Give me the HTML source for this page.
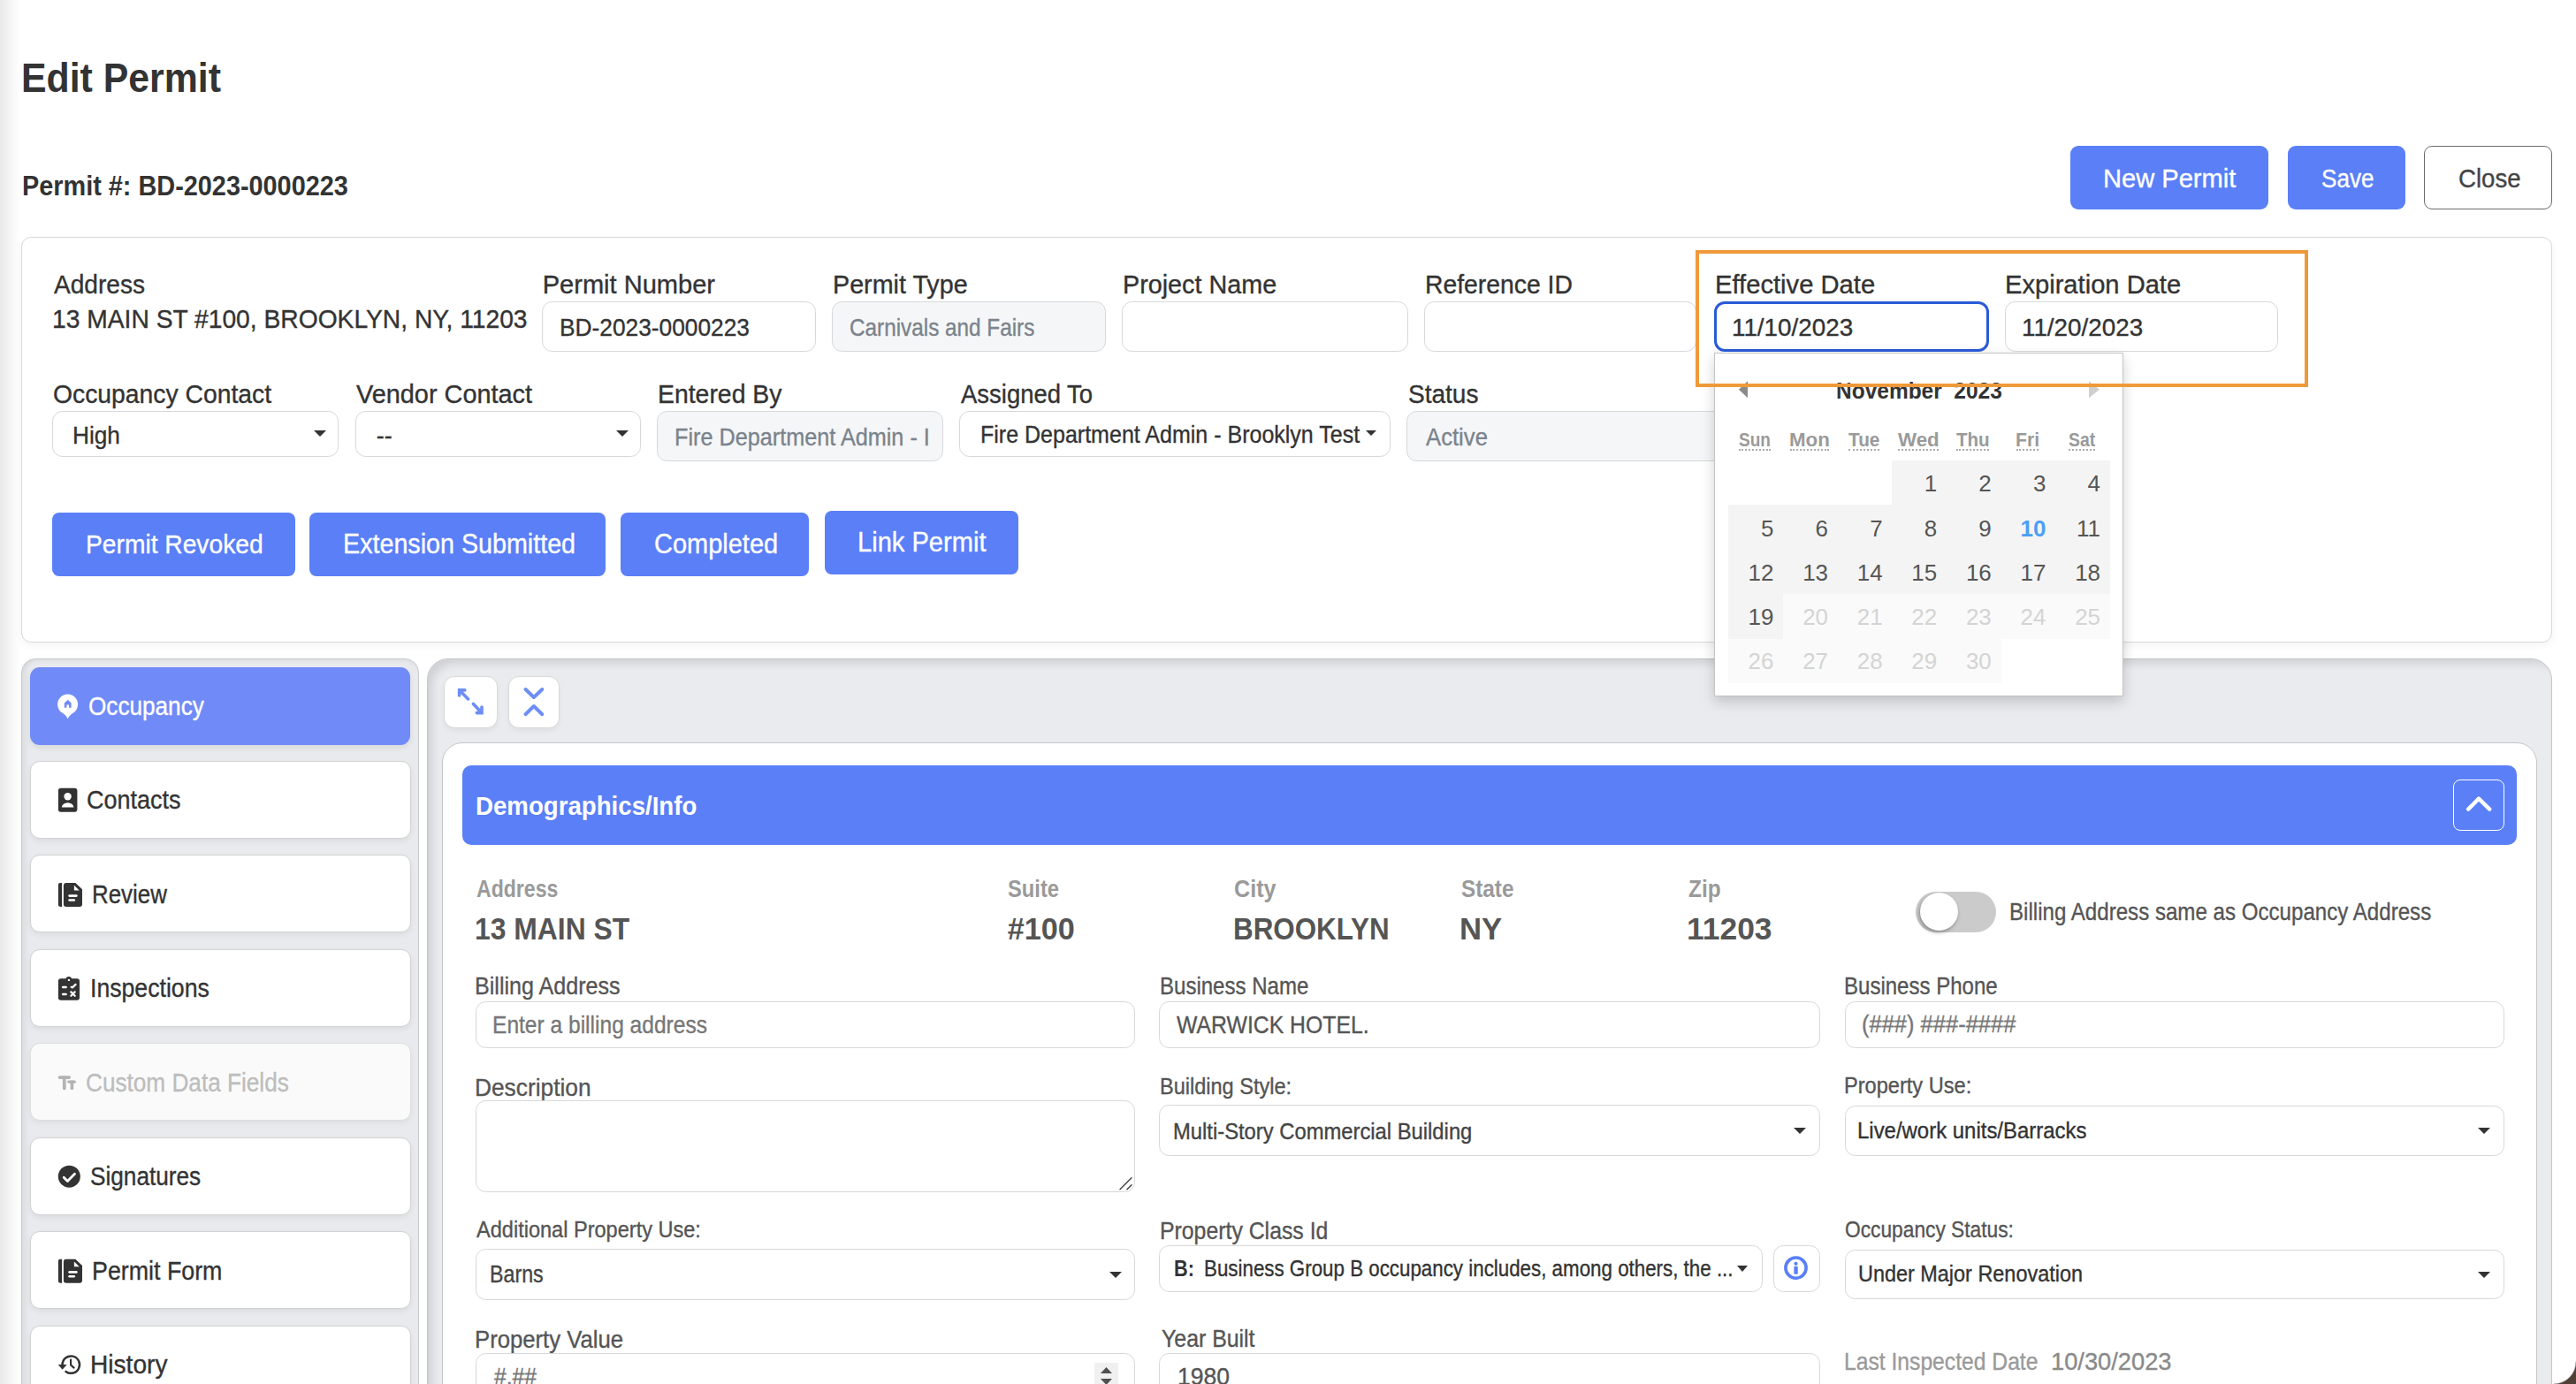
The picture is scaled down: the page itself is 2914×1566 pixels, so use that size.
<!DOCTYPE html>
<html><head><meta charset="utf-8"><style>
html,body{margin:0;padding:0;}
body{width:2914px;height:1566px;overflow:hidden;position:relative;background:#fff;font-family:"Liberation Sans", sans-serif;}
</style></head><body>
<div style="position:absolute;left:0.0px;top:0.0px;width:24.0px;height:1566.0px;box-sizing:border-box;background:linear-gradient(to right,#e9e9e9,#f4f4f4 45%,#fbfbfb 75%,#fff);"></div>
<div id="t0" style="position:absolute;left:23.9px;top:66.0px;font-size:45.67px;line-height:1;white-space:nowrap;color:#333;font-weight:bold;transform:scaleX(0.9377);transform-origin:0 0;">Edit Permit</div>
<div id="t1" style="position:absolute;left:24.8px;top:195.0px;font-size:30.62px;line-height:1;white-space:nowrap;color:#333;font-weight:bold;transform:scaleX(0.9425);transform-origin:0 0;">Permit #: BD-2023-0000223</div>
<div style="position:absolute;left:2342.0px;top:165.0px;width:224.0px;height:72.0px;box-sizing:border-box;background:#5a7ff7;border-radius:9px;"></div>
<div id="t2" style="position:absolute;left:2379.4px;top:187.0px;font-size:30.1px;line-height:1;white-space:nowrap;color:#fff;font-weight:normal;transform:scaleX(0.9666);transform-origin:0 0;-webkit-text-stroke:0.35px currentColor;">New Permit</div>
<div style="position:absolute;left:2588.0px;top:165.0px;width:133.0px;height:72.0px;box-sizing:border-box;background:#5a7ff7;border-radius:9px;"></div>
<div id="t3" style="position:absolute;left:2626.1px;top:187.0px;font-size:30.1px;line-height:1;white-space:nowrap;color:#fff;font-weight:normal;transform:scaleX(0.8675);transform-origin:0 0;-webkit-text-stroke:0.35px currentColor;">Save</div>
<div style="position:absolute;left:2742.0px;top:165.0px;width:145.0px;height:72.0px;box-sizing:border-box;background:#fff;border:1.5px solid #6b6b6b;border-radius:9px;"></div>
<div id="t4" style="position:absolute;left:2780.8px;top:187.0px;font-size:30.1px;line-height:1;white-space:nowrap;color:#444;font-weight:normal;transform:scaleX(0.9175);transform-origin:0 0;-webkit-text-stroke:0.35px currentColor;">Close</div>
<div style="position:absolute;left:24.0px;top:267.8px;width:2863.0px;height:459.2px;box-sizing:border-box;background:#fff;border:1.2px solid #d8d8d8;border-radius:11px;box-shadow:0 4px 8px rgba(0,0,0,0.045);"></div>
<div id="t5" style="position:absolute;left:61.3px;top:308.0px;font-size:29.06px;line-height:1;white-space:nowrap;color:#333;font-weight:normal;transform:scaleX(0.9667);transform-origin:0 0;-webkit-text-stroke:0.35px currentColor;">Address</div>
<div id="t6" style="position:absolute;left:59.4px;top:347.0px;font-size:29.06px;line-height:1;white-space:nowrap;color:#333;font-weight:normal;transform:scaleX(0.9716);transform-origin:0 0;-webkit-text-stroke:0.35px currentColor;">13 MAIN ST #100, BROOKLYN, NY, 11203</div>
<div id="t7" style="position:absolute;left:613.7px;top:308.0px;font-size:29.06px;line-height:1;white-space:nowrap;color:#333;font-weight:normal;-webkit-text-stroke:0.35px currentColor;">Permit Number</div>
<div style="position:absolute;left:613.2px;top:341.2px;width:310.0px;height:56.5px;box-sizing:border-box;background:#fff;border:1.3px solid #d6d8db;border-radius:11.5px;"></div>
<div id="t8" style="position:absolute;left:632.8px;top:358.0px;font-size:26.99px;line-height:1;white-space:nowrap;color:#333;font-weight:normal;transform:scaleX(0.9746);transform-origin:0 0;-webkit-text-stroke:0.35px currentColor;">BD-2023-0000223</div>
<div id="t9" style="position:absolute;left:942.3px;top:308.0px;font-size:29.06px;line-height:1;white-space:nowrap;color:#333;font-weight:normal;transform:scaleX(0.9881);transform-origin:0 0;-webkit-text-stroke:0.35px currentColor;">Permit Type</div>
<div style="position:absolute;left:941.2px;top:341.2px;width:310.1px;height:56.5px;box-sizing:border-box;background:#f5f6f8;border:1.3px solid #d6d8db;border-radius:11.5px;"></div>
<div id="t10" style="position:absolute;left:961.2px;top:358.0px;font-size:26.99px;line-height:1;white-space:nowrap;color:#7b838b;font-weight:normal;transform:scaleX(0.9006);transform-origin:0 0;-webkit-text-stroke:0.35px currentColor;">Carnivals and Fairs</div>
<div id="t11" style="position:absolute;left:1269.7px;top:308.0px;font-size:29.06px;line-height:1;white-space:nowrap;color:#333;font-weight:normal;transform:scaleX(0.9896);transform-origin:0 0;-webkit-text-stroke:0.35px currentColor;">Project Name</div>
<div style="position:absolute;left:1269.2px;top:341.2px;width:323.5px;height:56.5px;box-sizing:border-box;background:#fff;border:1.3px solid #d6d8db;border-radius:11.5px;"></div>
<div id="t12" style="position:absolute;left:1611.7px;top:308.0px;font-size:29.06px;line-height:1;white-space:nowrap;color:#333;font-weight:normal;transform:scaleX(0.9753);transform-origin:0 0;-webkit-text-stroke:0.35px currentColor;">Reference ID</div>
<div style="position:absolute;left:1611.2px;top:341.2px;width:308.1px;height:56.5px;box-sizing:border-box;background:#fff;border:1.3px solid #d6d8db;border-radius:11.5px;"></div>
<div id="t13" style="position:absolute;left:1939.7px;top:308.0px;font-size:29.06px;line-height:1;white-space:nowrap;color:#333;font-weight:normal;transform:scaleX(1.0049);transform-origin:0 0;-webkit-text-stroke:0.35px currentColor;">Effective Date</div>
<div style="position:absolute;left:1938.9px;top:341.2px;width:310.8px;height:56.5px;box-sizing:border-box;background:#fff;border:3px solid #2a5ad8;border-radius:12px;"></div>
<div id="t14" style="position:absolute;left:1959.0px;top:358.0px;font-size:26.99px;line-height:1;white-space:nowrap;color:#333;font-weight:normal;transform:scaleX(1.0304);transform-origin:0 0;-webkit-text-stroke:0.35px currentColor;">11/10/2023</div>
<div id="t15" style="position:absolute;left:2268.1px;top:308.0px;font-size:29.06px;line-height:1;white-space:nowrap;color:#333;font-weight:normal;transform:scaleX(1.0029);transform-origin:0 0;-webkit-text-stroke:0.35px currentColor;">Expiration Date</div>
<div style="position:absolute;left:2267.5px;top:341.2px;width:309.6px;height:56.5px;box-sizing:border-box;background:#fff;border:1.3px solid #d6d8db;border-radius:11.5px;"></div>
<div id="t16" style="position:absolute;left:2287.2px;top:358.0px;font-size:26.99px;line-height:1;white-space:nowrap;color:#333;font-weight:normal;transform:scaleX(1.0304);transform-origin:0 0;-webkit-text-stroke:0.35px currentColor;">11/20/2023</div>
<div id="t17" style="position:absolute;left:60.3px;top:432.0px;font-size:29.06px;line-height:1;white-space:nowrap;color:#333;font-weight:normal;transform:scaleX(0.9746);transform-origin:0 0;-webkit-text-stroke:0.35px currentColor;">Occupancy Contact</div>
<div style="position:absolute;left:59.2px;top:465.2px;width:323.9px;height:52.0px;box-sizing:border-box;background:#fff;border:1.3px solid #d6d8db;border-radius:11.5px;"></div>
<div id="t18" style="position:absolute;left:82.2px;top:480.0px;font-size:26.99px;line-height:1;white-space:nowrap;color:#333;font-weight:normal;transform:scaleX(0.9716);transform-origin:0 0;-webkit-text-stroke:0.35px currentColor;">High</div>
<div style="position:absolute;left:355.0px;top:487.0px;width:0;height:0;border-left:7.0px solid transparent;border-right:7.0px solid transparent;border-top:7.0px solid #333;"></div>
<div id="t19" style="position:absolute;left:403.1px;top:432.0px;font-size:29.06px;line-height:1;white-space:nowrap;color:#333;font-weight:normal;transform:scaleX(0.9942);transform-origin:0 0;-webkit-text-stroke:0.35px currentColor;">Vendor Contact</div>
<div style="position:absolute;left:401.6px;top:465.2px;width:323.1px;height:52.0px;box-sizing:border-box;background:#fff;border:1.3px solid #d6d8db;border-radius:11.5px;"></div>
<div id="t20" style="position:absolute;left:425.7px;top:480.0px;font-size:26.99px;line-height:1;white-space:nowrap;color:#333;font-weight:normal;-webkit-text-stroke:0.35px currentColor;">--</div>
<div style="position:absolute;left:697.0px;top:487.0px;width:0;height:0;border-left:7.0px solid transparent;border-right:7.0px solid transparent;border-top:7.0px solid #333;"></div>
<div id="t21" style="position:absolute;left:743.7px;top:432.0px;font-size:29.06px;line-height:1;white-space:nowrap;color:#333;font-weight:normal;transform:scaleX(0.9776);transform-origin:0 0;-webkit-text-stroke:0.35px currentColor;">Entered By</div>
<div style="position:absolute;left:743.0px;top:465.2px;width:324.2px;height:56.5px;box-sizing:border-box;background:#f5f6f8;border:1.3px solid #d6d8db;border-radius:11.5px;"></div>
<div id="t22" style="position:absolute;left:762.8px;top:482.0px;font-size:26.99px;line-height:1;white-space:nowrap;color:#7b838b;font-weight:normal;transform:scaleX(0.9349);transform-origin:0 0;-webkit-text-stroke:0.35px currentColor;">Fire Department Admin - I</div>
<div id="t23" style="position:absolute;left:1087.2px;top:432.0px;font-size:29.06px;line-height:1;white-space:nowrap;color:#333;font-weight:normal;transform:scaleX(0.9454);transform-origin:0 0;-webkit-text-stroke:0.35px currentColor;">Assigned To</div>
<div style="position:absolute;left:1085.2px;top:465.2px;width:487.5px;height:52.0px;box-sizing:border-box;background:#fff;border:1.3px solid #d6d8db;border-radius:11.5px;"></div>
<div id="t24" style="position:absolute;left:1109.1px;top:479.0px;font-size:26.99px;line-height:1;white-space:nowrap;color:#333;font-weight:normal;transform:scaleX(0.9271);transform-origin:0 0;-webkit-text-stroke:0.35px currentColor;">Fire Department Admin - Brooklyn Test</div>
<div style="position:absolute;left:1545.2px;top:487.1px;width:0;height:0;border-left:6.8px solid transparent;border-right:6.8px solid transparent;border-top:6.8px solid #333;"></div>
<div id="t25" style="position:absolute;left:1592.7px;top:432.0px;font-size:29.06px;line-height:1;white-space:nowrap;color:#333;font-weight:normal;transform:scaleX(0.9651);transform-origin:0 0;-webkit-text-stroke:0.35px currentColor;">Status</div>
<div style="position:absolute;left:1591.2px;top:465.2px;width:369.5px;height:56.5px;box-sizing:border-box;background:#f5f6f8;border:1.3px solid #d6d8db;border-radius:11.5px;"></div>
<div id="t26" style="position:absolute;left:1612.7px;top:482.0px;font-size:26.99px;line-height:1;white-space:nowrap;color:#7b838b;font-weight:normal;transform:scaleX(0.9521);transform-origin:0 0;-webkit-text-stroke:0.35px currentColor;">Active</div>
<div style="position:absolute;left:59.0px;top:580.0px;width:275.0px;height:71.5px;box-sizing:border-box;background:#5a7ff7;border-radius:8px;"></div>
<div id="t27" style="position:absolute;left:96.9px;top:600.0px;font-size:30.41px;line-height:1;white-space:nowrap;color:#fff;font-weight:normal;transform:scaleX(0.9275);transform-origin:0 0;-webkit-text-stroke:0.35px currentColor;">Permit Revoked</div>
<div style="position:absolute;left:350.0px;top:580.0px;width:335.0px;height:71.5px;box-sizing:border-box;background:#5a7ff7;border-radius:8px;"></div>
<div id="t28" style="position:absolute;left:387.5px;top:600.0px;font-size:31.14px;line-height:1;white-space:nowrap;color:#fff;font-weight:normal;transform:scaleX(0.9214);transform-origin:0 0;-webkit-text-stroke:0.35px currentColor;">Extension Submitted</div>
<div style="position:absolute;left:702.0px;top:580.0px;width:213.0px;height:71.5px;box-sizing:border-box;background:#5a7ff7;border-radius:8px;"></div>
<div id="t29" style="position:absolute;left:740.1px;top:600.0px;font-size:31.14px;line-height:1;white-space:nowrap;color:#fff;font-weight:normal;transform:scaleX(0.9311);transform-origin:0 0;-webkit-text-stroke:0.35px currentColor;">Completed</div>
<div style="position:absolute;left:933.0px;top:578.0px;width:219.0px;height:72.0px;box-sizing:border-box;background:#5a7ff7;border-radius:8px;"></div>
<div id="t30" style="position:absolute;left:970.1px;top:598.0px;font-size:31.14px;line-height:1;white-space:nowrap;color:#fff;font-weight:normal;transform:scaleX(0.9349);transform-origin:0 0;-webkit-text-stroke:0.35px currentColor;">Link Permit</div>
<div style="position:absolute;left:24.0px;top:744.5px;width:450.0px;height:855.5px;box-sizing:border-box;background:#e9eaee;border:1.2px solid #c9cace;border-radius:16px;box-shadow:inset 7px 0 7px -4px rgba(0,0,0,0.07), inset 0 6px 6px -4px rgba(0,0,0,0.05);"></div>
<div style="position:absolute;left:34.0px;top:755.0px;width:430.0px;height:87.5px;box-sizing:border-box;background:#708bf7;border-radius:11px;box-shadow:0 3px 6px rgba(0,0,0,0.08);"></div>
<div id="t31" style="position:absolute;left:99.5px;top:785.0px;font-size:29.06px;line-height:1;white-space:nowrap;color:#fff;font-weight:normal;transform:scaleX(0.9000);transform-origin:0 0;-webkit-text-stroke:0.35px currentColor;">Occupancy</div>
<div style="position:absolute;left:33.5px;top:861.0px;width:431.0px;height:88.0px;box-sizing:border-box;background:#fff;border:1.2px solid #d2d2d2;border-radius:11px;box-shadow:0 3px 6px rgba(0,0,0,0.06);"></div>
<div id="t32" style="position:absolute;left:98.3px;top:891.0px;font-size:29.06px;line-height:1;white-space:nowrap;color:#333;font-weight:normal;transform:scaleX(0.9283);transform-origin:0 0;-webkit-text-stroke:0.35px currentColor;">Contacts</div>
<div style="position:absolute;left:33.5px;top:967.1px;width:431.0px;height:88.0px;box-sizing:border-box;background:#fff;border:1.2px solid #d2d2d2;border-radius:11px;box-shadow:0 3px 6px rgba(0,0,0,0.06);"></div>
<div id="t33" style="position:absolute;left:104.1px;top:998.0px;font-size:29.06px;line-height:1;white-space:nowrap;color:#333;font-weight:normal;transform:scaleX(0.8911);transform-origin:0 0;-webkit-text-stroke:0.35px currentColor;">Review</div>
<div style="position:absolute;left:33.5px;top:1074.0px;width:431.0px;height:88.0px;box-sizing:border-box;background:#fff;border:1.2px solid #d2d2d2;border-radius:11px;box-shadow:0 3px 6px rgba(0,0,0,0.06);"></div>
<div id="t34" style="position:absolute;left:101.5px;top:1104.0px;font-size:29.06px;line-height:1;white-space:nowrap;color:#333;font-weight:normal;transform:scaleX(0.9175);transform-origin:0 0;-webkit-text-stroke:0.35px currentColor;">Inspections</div>
<div style="position:absolute;left:33.5px;top:1180.1px;width:431.0px;height:88.0px;box-sizing:border-box;background:#fafafa;border:1.2px solid #dedede;border-radius:11px;box-shadow:0 3px 6px rgba(0,0,0,0.05);"></div>
<div id="t35" style="position:absolute;left:97.2px;top:1211.0px;font-size:29.06px;line-height:1;white-space:nowrap;color:#bdbdbd;font-weight:normal;transform:scaleX(0.9009);transform-origin:0 0;-webkit-text-stroke:0.35px currentColor;">Custom Data Fields</div>
<div style="position:absolute;left:33.5px;top:1287.0px;width:431.0px;height:88.0px;box-sizing:border-box;background:#fff;border:1.2px solid #d2d2d2;border-radius:11px;box-shadow:0 3px 6px rgba(0,0,0,0.06);"></div>
<div id="t36" style="position:absolute;left:101.8px;top:1317.0px;font-size:29.06px;line-height:1;white-space:nowrap;color:#333;font-weight:normal;transform:scaleX(0.9014);transform-origin:0 0;-webkit-text-stroke:0.35px currentColor;">Signatures</div>
<div style="position:absolute;left:33.5px;top:1392.5px;width:431.0px;height:88.0px;box-sizing:border-box;background:#fff;border:1.2px solid #d2d2d2;border-radius:11px;box-shadow:0 3px 6px rgba(0,0,0,0.06);"></div>
<div id="t37" style="position:absolute;left:104.1px;top:1424.0px;font-size:29.06px;line-height:1;white-space:nowrap;color:#333;font-weight:normal;transform:scaleX(0.9230);transform-origin:0 0;-webkit-text-stroke:0.35px currentColor;">Permit Form</div>
<div style="position:absolute;left:33.5px;top:1500.0px;width:431.0px;height:88.0px;box-sizing:border-box;background:#fff;border:1.2px solid #d2d2d2;border-radius:11px;box-shadow:0 3px 6px rgba(0,0,0,0.06);"></div>
<div id="t38" style="position:absolute;left:102.2px;top:1530.0px;font-size:29.06px;line-height:1;white-space:nowrap;color:#333;font-weight:normal;transform:scaleX(0.9679);transform-origin:0 0;-webkit-text-stroke:0.35px currentColor;">History</div>
<div style="position:absolute;left:483.0px;top:744.5px;width:2404.0px;height:875.5px;box-sizing:border-box;background:#eaebef;border:1.2px solid #c4c5c9;border-radius:24px;box-shadow:inset 8px 8px 10px -3px rgba(0,0,0,0.11);"></div>
<div style="position:absolute;left:502.0px;top:765.3px;width:61.3px;height:59.2px;box-sizing:border-box;background:#fff;border:1.2px solid #d9d9d9;border-radius:12px;box-shadow:0 3px 5px rgba(0,0,0,0.05);"></div>
<div style="position:absolute;left:575.4px;top:765.3px;width:57.8px;height:59.2px;box-sizing:border-box;background:#fff;border:1.2px solid #d9d9d9;border-radius:12px;box-shadow:0 3px 5px rgba(0,0,0,0.05);"></div>
<div style="position:absolute;left:499.5px;top:840.0px;width:2370.5px;height:780.0px;box-sizing:border-box;background:#fff;border:1.2px solid #c4c5c8;border-radius:23px;"></div>
<div style="position:absolute;left:523.0px;top:866.0px;width:2324.0px;height:89.6px;box-sizing:border-box;background:#5a7ff7;border-radius:10px;"></div>
<div id="t39" style="position:absolute;left:538.4px;top:897.0px;font-size:29.58px;line-height:1;white-space:nowrap;color:#fff;font-weight:bold;transform:scaleX(0.9345);transform-origin:0 0;">Demographics/Info</div>
<div style="position:absolute;left:2775.0px;top:882.0px;width:58.0px;height:58.0px;box-sizing:border-box;border:1.5px solid #fff;border-radius:8px;"></div>
<div id="t40" style="position:absolute;left:539.3px;top:993.0px;font-size:26.99px;line-height:1;white-space:nowrap;color:#9a9a9a;font-weight:bold;transform:scaleX(0.8554);transform-origin:0 0;">Address</div>
<div id="t41" style="position:absolute;left:537.4px;top:1034.0px;font-size:34.25px;line-height:1;white-space:nowrap;color:#555;font-weight:bold;transform:scaleX(0.9298);transform-origin:0 0;">13 MAIN ST</div>
<div id="t42" style="position:absolute;left:1139.7px;top:993.0px;font-size:26.99px;line-height:1;white-space:nowrap;color:#9a9a9a;font-weight:bold;transform:scaleX(0.8793);transform-origin:0 0;">Suite</div>
<div id="t43" style="position:absolute;left:1139.7px;top:1034.0px;font-size:34.25px;line-height:1;white-space:nowrap;color:#555;font-weight:bold;">#100</div>
<div id="t44" style="position:absolute;left:1395.8px;top:993.0px;font-size:26.99px;line-height:1;white-space:nowrap;color:#9a9a9a;font-weight:bold;transform:scaleX(0.9326);transform-origin:0 0;">City</div>
<div id="t45" style="position:absolute;left:1394.9px;top:1034.0px;font-size:34.25px;line-height:1;white-space:nowrap;color:#555;font-weight:bold;transform:scaleX(0.9159);transform-origin:0 0;">BROOKLYN</div>
<div id="t46" style="position:absolute;left:1652.7px;top:993.0px;font-size:26.99px;line-height:1;white-space:nowrap;color:#9a9a9a;font-weight:bold;transform:scaleX(0.9018);transform-origin:0 0;">State</div>
<div id="t47" style="position:absolute;left:1650.7px;top:1034.0px;font-size:34.25px;line-height:1;white-space:nowrap;color:#555;font-weight:bold;transform:scaleX(1.0124);transform-origin:0 0;">NY</div>
<div id="t48" style="position:absolute;left:1909.7px;top:993.0px;font-size:26.99px;line-height:1;white-space:nowrap;color:#9a9a9a;font-weight:bold;transform:scaleX(0.9054);transform-origin:0 0;">Zip</div>
<div id="t49" style="position:absolute;left:1907.6px;top:1034.0px;font-size:34.25px;line-height:1;white-space:nowrap;color:#555;font-weight:bold;transform:scaleX(1.0343);transform-origin:0 0;">11203</div>
<div style="position:absolute;left:2167.0px;top:1008.6px;width:90.6px;height:46.2px;box-sizing:border-box;background:#cbcbcb;border-radius:23px;"></div>
<div style="position:absolute;left:2171.5px;top:1010.3px;width:43.0px;height:43.0px;box-sizing:border-box;background:#fff;border-radius:50%;box-shadow:-1px 2px 4px rgba(0,0,0,0.35);"></div>
<div id="t50" style="position:absolute;left:2272.9px;top:1018.0px;font-size:27.51px;line-height:1;white-space:nowrap;color:#555;font-weight:normal;transform:scaleX(0.8770);transform-origin:0 0;-webkit-text-stroke:0.35px currentColor;">Billing Address same as Occupancy Address</div>
<div id="t51" style="position:absolute;left:537.4px;top:1103.0px;font-size:26.99px;line-height:1;white-space:nowrap;color:#555;font-weight:normal;transform:scaleX(0.9296);transform-origin:0 0;-webkit-text-stroke:0.35px currentColor;">Billing Address</div>
<div style="position:absolute;left:537.8px;top:1132.7px;width:746.4px;height:53.3px;box-sizing:border-box;background:#fff;border:1.3px solid #d6d8db;border-radius:11.5px;"></div>
<div id="t52" style="position:absolute;left:556.9px;top:1147.0px;font-size:26.99px;line-height:1;white-space:nowrap;color:#777;font-weight:normal;transform:scaleX(0.9100);transform-origin:0 0;-webkit-text-stroke:0.35px currentColor;">Enter a billing address</div>
<div id="t53" style="position:absolute;left:537.4px;top:1218.0px;font-size:26.99px;line-height:1;white-space:nowrap;color:#555;font-weight:normal;transform:scaleX(0.9745);transform-origin:0 0;-webkit-text-stroke:0.35px currentColor;">Description</div>
<div style="position:absolute;left:537.8px;top:1245.2px;width:746.4px;height:104.2px;box-sizing:border-box;background:#fff;border:1.3px solid #d6d8db;border-radius:11.5px;"></div>
<div id="t54" style="position:absolute;left:539.3px;top:1379.0px;font-size:24.91px;line-height:1;white-space:nowrap;color:#555;font-weight:normal;transform:scaleX(0.9454);transform-origin:0 0;-webkit-text-stroke:0.35px currentColor;">Additional Property Use:</div>
<div style="position:absolute;left:537.8px;top:1413.4px;width:746.4px;height:57.8px;box-sizing:border-box;background:#fff;border:1.3px solid #d6d8db;border-radius:11.5px;"></div>
<div id="t55" style="position:absolute;left:553.5px;top:1429.0px;font-size:26.99px;line-height:1;white-space:nowrap;color:#444;font-weight:normal;transform:scaleX(0.8603);transform-origin:0 0;-webkit-text-stroke:0.35px currentColor;">Barns</div>
<div style="position:absolute;left:1255.0px;top:1439.0px;width:0;height:0;border-left:7.0px solid transparent;border-right:7.0px solid transparent;border-top:7.5px solid #333;"></div>
<div id="t56" style="position:absolute;left:537.4px;top:1503.0px;font-size:26.99px;line-height:1;white-space:nowrap;color:#555;font-weight:normal;transform:scaleX(0.9522);transform-origin:0 0;-webkit-text-stroke:0.35px currentColor;">Property Value</div>
<div style="position:absolute;left:537.8px;top:1530.6px;width:746.4px;height:90.1px;box-sizing:border-box;background:#fff;border:1.3px solid #d6d8db;border-radius:11.5px;"></div>
<div id="t57" style="position:absolute;left:558.7px;top:1545.0px;font-size:26.99px;line-height:1;white-space:nowrap;color:#777;font-weight:normal;transform:scaleX(0.9141);transform-origin:0 0;-webkit-text-stroke:0.35px currentColor;">#.##</div>
<div id="t58" style="position:absolute;left:1311.9px;top:1103.0px;font-size:26.99px;line-height:1;white-space:nowrap;color:#555;font-weight:normal;transform:scaleX(0.8905);transform-origin:0 0;-webkit-text-stroke:0.35px currentColor;">Business Name</div>
<div style="position:absolute;left:1311.2px;top:1132.6px;width:748.0px;height:53.5px;box-sizing:border-box;background:#fff;border:1.3px solid #d6d8db;border-radius:11.5px;"></div>
<div id="t59" style="position:absolute;left:1330.7px;top:1147.0px;font-size:26.99px;line-height:1;white-space:nowrap;color:#555;font-weight:normal;transform:scaleX(0.9189);transform-origin:0 0;-webkit-text-stroke:0.35px currentColor;">WARWICK HOTEL.</div>
<div id="t60" style="position:absolute;left:1311.8px;top:1217.0px;font-size:24.91px;line-height:1;white-space:nowrap;color:#555;font-weight:normal;transform:scaleX(0.9441);transform-origin:0 0;-webkit-text-stroke:0.35px currentColor;">Building Style:</div>
<div style="position:absolute;left:1311.2px;top:1250.2px;width:748.0px;height:57.8px;box-sizing:border-box;background:#fff;border:1.3px solid #d6d8db;border-radius:11.5px;"></div>
<div id="t61" style="position:absolute;left:1326.8px;top:1268.0px;font-size:24.91px;line-height:1;white-space:nowrap;color:#444;font-weight:normal;transform:scaleX(0.9549);transform-origin:0 0;-webkit-text-stroke:0.35px currentColor;">Multi-Story Commercial Building</div>
<div style="position:absolute;left:2029.0px;top:1275.5px;width:0;height:0;border-left:7.0px solid transparent;border-right:7.0px solid transparent;border-top:7.5px solid #333;"></div>
<div id="t62" style="position:absolute;left:1311.9px;top:1380.0px;font-size:26.99px;line-height:1;white-space:nowrap;color:#555;font-weight:normal;transform:scaleX(0.9198);transform-origin:0 0;-webkit-text-stroke:0.35px currentColor;">Property Class Id</div>
<div style="position:absolute;left:1311.2px;top:1408.7px;width:682.5px;height:53.4px;box-sizing:border-box;background:#fff;border:1.3px solid #d6d8db;border-radius:11.5px;"></div>
<div id="t63" style="position:absolute;left:1327.8px;top:1423.0px;font-size:24.91px;line-height:1;white-space:nowrap;color:#333;font-weight:bold;transform:scaleX(0.8701);transform-origin:0 0;">B:</div>
<div id="t64" style="position:absolute;left:1361.9px;top:1423.0px;font-size:24.91px;line-height:1;white-space:nowrap;color:#333;font-weight:normal;transform:scaleX(0.8969);transform-origin:0 0;-webkit-text-stroke:0.35px currentColor;">Business Group B occupancy includes, among others, the ...</div>
<div style="position:absolute;left:1964.5px;top:1432.0px;width:0;height:0;border-left:6.8px solid transparent;border-right:6.8px solid transparent;border-top:7.5px solid #333;"></div>
<div style="position:absolute;left:2005.8px;top:1408.7px;width:53.4px;height:53.4px;box-sizing:border-box;background:#fff;border:1.3px solid #d6d8db;border-radius:11.5px;"></div>
<div id="t65" style="position:absolute;left:1313.7px;top:1502.0px;font-size:26.99px;line-height:1;white-space:nowrap;color:#555;font-weight:normal;transform:scaleX(0.9216);transform-origin:0 0;-webkit-text-stroke:0.35px currentColor;">Year Built</div>
<div style="position:absolute;left:1311.2px;top:1530.7px;width:748.0px;height:90.0px;box-sizing:border-box;background:#fff;border:1.3px solid #d6d8db;border-radius:11.5px;"></div>
<div id="t66" style="position:absolute;left:1331.7px;top:1545.0px;font-size:26.99px;line-height:1;white-space:nowrap;color:#555;font-weight:normal;transform:scaleX(0.9821);transform-origin:0 0;-webkit-text-stroke:0.35px currentColor;">1980</div>
<div id="t67" style="position:absolute;left:2086.2px;top:1103.0px;font-size:26.99px;line-height:1;white-space:nowrap;color:#555;font-weight:normal;transform:scaleX(0.8906);transform-origin:0 0;-webkit-text-stroke:0.35px currentColor;">Business Phone</div>
<div style="position:absolute;left:2086.5px;top:1132.9px;width:746.7px;height:53.1px;box-sizing:border-box;background:#fff;border:1.3px solid #d6d8db;border-radius:11.5px;"></div>
<div id="t68" style="position:absolute;left:2105.8px;top:1146.0px;font-size:26.99px;line-height:1;white-space:nowrap;color:#777;font-weight:normal;transform:scaleX(0.9448);transform-origin:0 0;-webkit-text-stroke:0.35px currentColor;">(###) ###-####</div>
<div id="t69" style="position:absolute;left:2086.1px;top:1216.0px;font-size:24.91px;line-height:1;white-space:nowrap;color:#555;font-weight:normal;transform:scaleX(0.9472);transform-origin:0 0;-webkit-text-stroke:0.35px currentColor;">Property Use:</div>
<div style="position:absolute;left:2086.5px;top:1250.9px;width:746.7px;height:57.0px;box-sizing:border-box;background:#fff;border:1.3px solid #d6d8db;border-radius:11.5px;"></div>
<div id="t70" style="position:absolute;left:2101.2px;top:1267.0px;font-size:24.91px;line-height:1;white-space:nowrap;color:#333;font-weight:normal;transform:scaleX(0.9613);transform-origin:0 0;-webkit-text-stroke:0.35px currentColor;">Live/work units/Barracks</div>
<div style="position:absolute;left:2802.7px;top:1276.0px;width:0;height:0;border-left:7.0px solid transparent;border-right:7.0px solid transparent;border-top:7.5px solid #333;"></div>
<div id="t71" style="position:absolute;left:2087.1px;top:1379.0px;font-size:24.91px;line-height:1;white-space:nowrap;color:#555;font-weight:normal;transform:scaleX(0.9131);transform-origin:0 0;-webkit-text-stroke:0.35px currentColor;">Occupancy Status:</div>
<div style="position:absolute;left:2086.5px;top:1413.8px;width:746.7px;height:56.7px;box-sizing:border-box;background:#fff;border:1.3px solid #d6d8db;border-radius:11.5px;"></div>
<div id="t72" style="position:absolute;left:2102.2px;top:1429.0px;font-size:24.91px;line-height:1;white-space:nowrap;color:#333;font-weight:normal;transform:scaleX(0.9407);transform-origin:0 0;-webkit-text-stroke:0.35px currentColor;">Under Major Renovation</div>
<div style="position:absolute;left:2802.7px;top:1438.5px;width:0;height:0;border-left:7.0px solid transparent;border-right:7.0px solid transparent;border-top:7.5px solid #333;"></div>
<div id="t73" style="position:absolute;left:2086.2px;top:1528.0px;font-size:26.99px;line-height:1;white-space:nowrap;color:#9a9a9a;font-weight:normal;transform:scaleX(0.9143);transform-origin:0 0;-webkit-text-stroke:0.35px currentColor;">Last Inspected Date</div>
<div id="t74" style="position:absolute;left:2319.5px;top:1528.0px;font-size:26.99px;line-height:1;white-space:nowrap;color:#8a8a8a;font-weight:normal;transform:scaleX(1.0110);transform-origin:0 0;-webkit-text-stroke:0.35px currentColor;">10/30/2023</div>
<svg style="position:absolute;left:0;top:0;" width="2914" height="1566" viewBox="0 0 2914 1566"><path d="M 76.7 813.6 Q 75.6 810.2 70.3 806.6 A 11.5 11.5 0 1 1 82.9 806.6 Q 77.8 810.2 76.7 813.6 Z" fill="#fff"/><path d="M 76.7 791.8 L 72.8 795.6 L 72.8 800.8 L 75.4 800.8 L 75.4 797.6 L 78.0 797.6 L 78.0 800.8 L 80.6 800.8 L 80.6 795.6 Z" fill="#708bf7"/><rect x="65.9" y="891.8" width="21.5" height="27" rx="3" fill="#333"/><circle cx="76.6" cy="901.3" r="4.2" fill="#fff"/><path d="M 69.9 913.6 A 6.7 5.4 0 0 1 83.3 913.6 Z" fill="#fff"/><g transform="translate(0,0)"><path d="M 68 998.9 L 70.1 998.9 L 70.1 1025.9 L 68 1025.9 Q 65.9 1025.9 65.9 1023.8 L 65.9 1001 Q 65.9 998.9 68 998.9 Z" fill="#333"/><path d="M 74.9 998.9 L 85.3 998.9 L 93 1006.3 L 93 1022.9 Q 93 1025.9 90 1025.9 L 74.9 1025.9 Q 71.9 1025.9 71.9 1022.9 L 71.9 1001.9 Q 71.9 998.9 74.9 998.9 Z" fill="#333"/><path d="M 83.9 1001.8 L 83.9 1007.5 L 89.7 1007.5 Z" fill="#fff"/><line x1="78.6" y1="1013.6" x2="86.4" y2="1013.6" stroke="#fff" stroke-width="2.6" stroke-linecap="round"/><line x1="78.6" y1="1018.5" x2="83.8" y2="1018.5" stroke="#fff" stroke-width="2.6" stroke-linecap="round"/></g><g transform="translate(0,425.8)"><path d="M 68 998.9 L 70.1 998.9 L 70.1 1025.9 L 68 1025.9 Q 65.9 1025.9 65.9 1023.8 L 65.9 1001 Q 65.9 998.9 68 998.9 Z" fill="#333"/><path d="M 74.9 998.9 L 85.3 998.9 L 93 1006.3 L 93 1022.9 Q 93 1025.9 90 1025.9 L 74.9 1025.9 Q 71.9 1025.9 71.9 1022.9 L 71.9 1001.9 Q 71.9 998.9 74.9 998.9 Z" fill="#333"/><path d="M 83.9 1001.8 L 83.9 1007.5 L 89.7 1007.5 Z" fill="#fff"/><line x1="78.6" y1="1013.6" x2="86.4" y2="1013.6" stroke="#fff" stroke-width="2.6" stroke-linecap="round"/><line x1="78.6" y1="1018.5" x2="83.8" y2="1018.5" stroke="#fff" stroke-width="2.6" stroke-linecap="round"/></g><rect x="65.9" y="1107.3" width="24.1" height="24.4" rx="3" fill="#333"/><path d="M 74.4 1108.5 Q 74.6 1105.1 77.8 1105.1 Q 81 1105.1 81.2 1108.5 Z" fill="#333"/><circle cx="77.9" cy="1108.9" r="1.2" fill="#fff"/><line x1="71.1" y1="1116.9" x2="74.6" y2="1116.9" stroke="#fff" stroke-width="2.5" stroke-linecap="round"/><line x1="71.1" y1="1125" x2="74.6" y2="1125" stroke="#fff" stroke-width="2.5" stroke-linecap="round"/><polyline points="80.6,1116.8 81.9,1117.4 85.6,1113.9" fill="none" stroke="#fff" stroke-width="2.2" stroke-linecap="round" stroke-linejoin="round"/><path d="M 80.3 1122.4 L 84.7 1126.8 M 84.7 1122.4 L 80.3 1126.8" stroke="#fff" stroke-width="2.2" stroke-linecap="round"/><line x1="67.4" y1="1219.1" x2="78.3" y2="1219.1" stroke="#b3b3b3" stroke-width="3.6" stroke-linecap="round"/><line x1="72.8" y1="1219.1" x2="72.8" y2="1231.4" stroke="#b3b3b3" stroke-width="3.8" stroke-linecap="round"/><line x1="77.7" y1="1224.1" x2="84.4" y2="1224.1" stroke="#b3b3b3" stroke-width="3.2" stroke-linecap="round"/><line x1="81.4" y1="1224.1" x2="81.4" y2="1231.4" stroke="#b3b3b3" stroke-width="3.6" stroke-linecap="round"/><circle cx="78.3" cy="1331.2" r="12.5" fill="#333"/><polyline points="72.2,1332.3 76.4,1336.5 84.5,1328.2" fill="none" stroke="#fff" stroke-width="2.8" stroke-linecap="round" stroke-linejoin="round"/><path d="M 70.6 1544.1 A 9.7 9.7 0 1 1 74.5 1551.9" fill="none" stroke="#333" stroke-width="2.5" stroke-linecap="round"/><path d="M 65.7 1544.1 L 75.7 1544.1 L 70.6 1549.8 Z" fill="#333"/><polyline points="80.1,1538.6 80.1,1544.6 83.6,1547.6" fill="none" stroke="#333" stroke-width="2.2" stroke-linecap="round"/><path d="M 519.6 786.9 L 519.6 780.9 L 525.8 780.9 M 520.2 781.5 L 529.6 790.9" fill="none" stroke="#6e8ef5" stroke-width="3.6" stroke-linecap="round" stroke-linejoin="miter"/><path d="M 545 800.1 L 545 806.6 L 539.3 806.6 M 544.4 806 L 535.4 796.4" fill="none" stroke="#6e8ef5" stroke-width="3.6" stroke-linecap="round" stroke-linejoin="miter"/><polyline points="594.5,780 603.9,789 613.3,780" fill="none" stroke="#6e8ef5" stroke-width="4" stroke-linecap="round" stroke-linejoin="round"/><polyline points="594.5,808.2 603.9,799 613.3,808.2" fill="none" stroke="#6e8ef5" stroke-width="4" stroke-linecap="round" stroke-linejoin="round"/><polyline points="2792.2,915.6 2804,903.6 2816.2,915.6" fill="none" stroke="#fff" stroke-width="4.4" stroke-linecap="round" stroke-linejoin="round"/><circle cx="2031.5" cy="1434.6" r="11.6" fill="none" stroke="#5a7ff7" stroke-width="3.6"/><circle cx="2031.5" cy="1429.8" r="2.1" fill="#5a7ff7"/><rect x="2029.4" y="1432.9" width="4.3" height="8.8" fill="#5a7ff7"/><path d="M 1267 1345.8 L 1280 1332.8 M 1275 1345.8 L 1280 1340.8" stroke="#444" stroke-width="1.5" stroke-linecap="round"/></svg>
<div style="position:absolute;left:1238.1px;top:1542.1px;width:26.6px;height:57.9px;box-sizing:border-box;background:#f0f0f0;"></div>
<svg style="position:absolute;left:0;top:0;" width="2914" height="1566" viewBox="0 0 2914 1566"><path d="M 1244.9 1553.9 L 1258 1553.9 L 1251.45 1546.9 Z M 1244.9 1560 L 1258 1560 L 1251.45 1567 Z" fill="#505050"/></svg>
<div style="position:absolute;left:2889.0px;top:1541.0px;width:25.0px;height:25.0px;box-sizing:border-box;background:radial-gradient(circle at 0 0, rgba(0,0,0,0) 24px, #4f4038 25.5px);"></div>
<div style="position:absolute;left:1939.0px;top:398.5px;width:462.5px;height:389.1px;box-sizing:border-box;background:#fff;border:1px solid #c4c4c4;box-shadow:0 6px 14px rgba(0,0,0,0.18);"></div>
<div id="t75" style="position:absolute;left:2076.6px;top:430.0px;font-size:25.95px;line-height:1;white-space:nowrap;color:#333;font-weight:bold;transform:scaleX(0.9441);transform-origin:0 0;">November&nbsp;&nbsp;2023</div>
<svg style="position:absolute;left:0;top:0;" width="2914" height="1566" viewBox="0 0 2914 1566"><path d="M 1966.9 440.7 L 1977 431.2 L 1977 450.3 Z" fill="#8a8a8a"/><path d="M 2375 440.7 L 2363 431.2 L 2363 450.3 Z" fill="#cfcfcf"/></svg>
<div id="t76" style="position:absolute;left:1967.4px;top:487.0px;font-size:22.32px;line-height:1;white-space:nowrap;color:#9a9a9a;font-weight:bold;transform:scaleX(0.8528);transform-origin:0 0;">Sun</div>
<div style="position:absolute;left:1967.4px;top:508.0px;width:35.4px;height:2.0px;box-sizing:border-box;border-top:2px dotted #aaa;"></div>
<div id="t77" style="position:absolute;left:2024.0px;top:487.0px;font-size:22.32px;line-height:1;white-space:nowrap;color:#9a9a9a;font-weight:bold;">Mon</div>
<div style="position:absolute;left:2025.0px;top:508.0px;width:44.2px;height:2.0px;box-sizing:border-box;border-top:2px dotted #aaa;"></div>
<div id="t78" style="position:absolute;left:2090.9px;top:487.0px;font-size:22.32px;line-height:1;white-space:nowrap;color:#9a9a9a;font-weight:bold;transform:scaleX(0.9308);transform-origin:0 0;">Tue</div>
<div style="position:absolute;left:2090.9px;top:508.0px;width:35.0px;height:2.0px;box-sizing:border-box;border-top:2px dotted #aaa;"></div>
<div id="t79" style="position:absolute;left:2147.0px;top:487.0px;font-size:22.32px;line-height:1;white-space:nowrap;color:#9a9a9a;font-weight:bold;">Wed</div>
<div style="position:absolute;left:2147.0px;top:508.0px;width:46.0px;height:2.0px;box-sizing:border-box;border-top:2px dotted #aaa;"></div>
<div id="t80" style="position:absolute;left:2213.3px;top:487.0px;font-size:22.32px;line-height:1;white-space:nowrap;color:#9a9a9a;font-weight:bold;transform:scaleX(0.9215);transform-origin:0 0;">Thu</div>
<div style="position:absolute;left:2213.3px;top:508.0px;width:37.1px;height:2.0px;box-sizing:border-box;border-top:2px dotted #aaa;"></div>
<div id="t81" style="position:absolute;left:2280.0px;top:487.0px;font-size:22.32px;line-height:1;white-space:nowrap;color:#9a9a9a;font-weight:bold;transform:scaleX(0.9501);transform-origin:0 0;">Fri</div>
<div style="position:absolute;left:2281.0px;top:508.0px;width:25.0px;height:2.0px;box-sizing:border-box;border-top:2px dotted #aaa;"></div>
<div id="t82" style="position:absolute;left:2339.7px;top:487.0px;font-size:22.32px;line-height:1;white-space:nowrap;color:#9a9a9a;font-weight:bold;transform:scaleX(0.8671);transform-origin:0 0;">Sat</div>
<div style="position:absolute;left:2339.7px;top:508.0px;width:30.6px;height:2.0px;box-sizing:border-box;border-top:2px dotted #aaa;"></div>
<div style="position:absolute;left:2140.1px;top:521.0px;width:61.9px;height:50.7px;box-sizing:border-box;background:#f4f4f4;"></div>
<div style="position:absolute;left:2140.1px;top:535px;width:51.1px;text-align:right;font-size:25.95px;line-height:1;color:#555;font-weight:normal;">1</div>
<div style="position:absolute;left:2201.7px;top:521.0px;width:61.9px;height:50.7px;box-sizing:border-box;background:#f4f4f4;"></div>
<div style="position:absolute;left:2201.7px;top:535px;width:51.1px;text-align:right;font-size:25.95px;line-height:1;color:#555;font-weight:normal;">2</div>
<div style="position:absolute;left:2263.3px;top:521.0px;width:61.9px;height:50.7px;box-sizing:border-box;background:#f4f4f4;"></div>
<div style="position:absolute;left:2263.3px;top:535px;width:51.1px;text-align:right;font-size:25.95px;line-height:1;color:#555;font-weight:normal;">3</div>
<div style="position:absolute;left:2324.9px;top:521.0px;width:61.9px;height:50.7px;box-sizing:border-box;background:#f4f4f4;"></div>
<div style="position:absolute;left:2324.9px;top:535px;width:51.1px;text-align:right;font-size:25.95px;line-height:1;color:#555;font-weight:normal;">4</div>
<div style="position:absolute;left:1955.3px;top:571.4px;width:61.9px;height:50.7px;box-sizing:border-box;background:#f4f4f4;"></div>
<div style="position:absolute;left:1955.3px;top:586px;width:51.1px;text-align:right;font-size:25.95px;line-height:1;color:#555;font-weight:normal;">5</div>
<div style="position:absolute;left:2016.9px;top:571.4px;width:61.9px;height:50.7px;box-sizing:border-box;background:#f4f4f4;"></div>
<div style="position:absolute;left:2016.9px;top:586px;width:51.1px;text-align:right;font-size:25.95px;line-height:1;color:#555;font-weight:normal;">6</div>
<div style="position:absolute;left:2078.5px;top:571.4px;width:61.9px;height:50.7px;box-sizing:border-box;background:#f4f4f4;"></div>
<div style="position:absolute;left:2078.5px;top:586px;width:51.1px;text-align:right;font-size:25.95px;line-height:1;color:#555;font-weight:normal;">7</div>
<div style="position:absolute;left:2140.1px;top:571.4px;width:61.9px;height:50.7px;box-sizing:border-box;background:#f4f4f4;"></div>
<div style="position:absolute;left:2140.1px;top:586px;width:51.1px;text-align:right;font-size:25.95px;line-height:1;color:#555;font-weight:normal;">8</div>
<div style="position:absolute;left:2201.7px;top:571.4px;width:61.9px;height:50.7px;box-sizing:border-box;background:#f4f4f4;"></div>
<div style="position:absolute;left:2201.7px;top:586px;width:51.1px;text-align:right;font-size:25.95px;line-height:1;color:#555;font-weight:normal;">9</div>
<div style="position:absolute;left:2263.3px;top:571.4px;width:61.9px;height:50.7px;box-sizing:border-box;background:#f4f4f4;"></div>
<div style="position:absolute;left:2263.3px;top:586px;width:51.1px;text-align:right;font-size:25.95px;line-height:1;color:#4b9ff5;font-weight:bold;">10</div>
<div style="position:absolute;left:2324.9px;top:571.4px;width:61.9px;height:50.7px;box-sizing:border-box;background:#f4f4f4;"></div>
<div style="position:absolute;left:2324.9px;top:586px;width:51.1px;text-align:right;font-size:25.95px;line-height:1;color:#555;font-weight:normal;">11</div>
<div style="position:absolute;left:1955.3px;top:621.8px;width:61.9px;height:50.7px;box-sizing:border-box;background:#f4f4f4;"></div>
<div style="position:absolute;left:1955.3px;top:636px;width:51.1px;text-align:right;font-size:25.95px;line-height:1;color:#555;font-weight:normal;">12</div>
<div style="position:absolute;left:2016.9px;top:621.8px;width:61.9px;height:50.7px;box-sizing:border-box;background:#f4f4f4;"></div>
<div style="position:absolute;left:2016.9px;top:636px;width:51.1px;text-align:right;font-size:25.95px;line-height:1;color:#555;font-weight:normal;">13</div>
<div style="position:absolute;left:2078.5px;top:621.8px;width:61.9px;height:50.7px;box-sizing:border-box;background:#f4f4f4;"></div>
<div style="position:absolute;left:2078.5px;top:636px;width:51.1px;text-align:right;font-size:25.95px;line-height:1;color:#555;font-weight:normal;">14</div>
<div style="position:absolute;left:2140.1px;top:621.8px;width:61.9px;height:50.7px;box-sizing:border-box;background:#f4f4f4;"></div>
<div style="position:absolute;left:2140.1px;top:636px;width:51.1px;text-align:right;font-size:25.95px;line-height:1;color:#555;font-weight:normal;">15</div>
<div style="position:absolute;left:2201.7px;top:621.8px;width:61.9px;height:50.7px;box-sizing:border-box;background:#f4f4f4;"></div>
<div style="position:absolute;left:2201.7px;top:636px;width:51.1px;text-align:right;font-size:25.95px;line-height:1;color:#555;font-weight:normal;">16</div>
<div style="position:absolute;left:2263.3px;top:621.8px;width:61.9px;height:50.7px;box-sizing:border-box;background:#f4f4f4;"></div>
<div style="position:absolute;left:2263.3px;top:636px;width:51.1px;text-align:right;font-size:25.95px;line-height:1;color:#555;font-weight:normal;">17</div>
<div style="position:absolute;left:2324.9px;top:621.8px;width:61.9px;height:50.7px;box-sizing:border-box;background:#f4f4f4;"></div>
<div style="position:absolute;left:2324.9px;top:636px;width:51.1px;text-align:right;font-size:25.95px;line-height:1;color:#555;font-weight:normal;">18</div>
<div style="position:absolute;left:1955.3px;top:672.1px;width:61.9px;height:50.7px;box-sizing:border-box;background:#f4f4f4;"></div>
<div style="position:absolute;left:1955.3px;top:686px;width:51.1px;text-align:right;font-size:25.95px;line-height:1;color:#555;font-weight:normal;">19</div>
<div style="position:absolute;left:2016.9px;top:672.1px;width:61.9px;height:50.7px;box-sizing:border-box;background:#fafafa;"></div>
<div style="position:absolute;left:2016.9px;top:686px;width:51.1px;text-align:right;font-size:25.95px;line-height:1;color:#d4d4d4;font-weight:normal;">20</div>
<div style="position:absolute;left:2078.5px;top:672.1px;width:61.9px;height:50.7px;box-sizing:border-box;background:#fafafa;"></div>
<div style="position:absolute;left:2078.5px;top:686px;width:51.1px;text-align:right;font-size:25.95px;line-height:1;color:#d4d4d4;font-weight:normal;">21</div>
<div style="position:absolute;left:2140.1px;top:672.1px;width:61.9px;height:50.7px;box-sizing:border-box;background:#fafafa;"></div>
<div style="position:absolute;left:2140.1px;top:686px;width:51.1px;text-align:right;font-size:25.95px;line-height:1;color:#d4d4d4;font-weight:normal;">22</div>
<div style="position:absolute;left:2201.7px;top:672.1px;width:61.9px;height:50.7px;box-sizing:border-box;background:#fafafa;"></div>
<div style="position:absolute;left:2201.7px;top:686px;width:51.1px;text-align:right;font-size:25.95px;line-height:1;color:#d4d4d4;font-weight:normal;">23</div>
<div style="position:absolute;left:2263.3px;top:672.1px;width:61.9px;height:50.7px;box-sizing:border-box;background:#fafafa;"></div>
<div style="position:absolute;left:2263.3px;top:686px;width:51.1px;text-align:right;font-size:25.95px;line-height:1;color:#d4d4d4;font-weight:normal;">24</div>
<div style="position:absolute;left:2324.9px;top:672.1px;width:61.9px;height:50.7px;box-sizing:border-box;background:#fafafa;"></div>
<div style="position:absolute;left:2324.9px;top:686px;width:51.1px;text-align:right;font-size:25.95px;line-height:1;color:#d4d4d4;font-weight:normal;">25</div>
<div style="position:absolute;left:1955.3px;top:722.5px;width:61.9px;height:50.7px;box-sizing:border-box;background:#fafafa;"></div>
<div style="position:absolute;left:1955.3px;top:736px;width:51.1px;text-align:right;font-size:25.95px;line-height:1;color:#d4d4d4;font-weight:normal;">26</div>
<div style="position:absolute;left:2016.9px;top:722.5px;width:61.9px;height:50.7px;box-sizing:border-box;background:#fafafa;"></div>
<div style="position:absolute;left:2016.9px;top:736px;width:51.1px;text-align:right;font-size:25.95px;line-height:1;color:#d4d4d4;font-weight:normal;">27</div>
<div style="position:absolute;left:2078.5px;top:722.5px;width:61.9px;height:50.7px;box-sizing:border-box;background:#fafafa;"></div>
<div style="position:absolute;left:2078.5px;top:736px;width:51.1px;text-align:right;font-size:25.95px;line-height:1;color:#d4d4d4;font-weight:normal;">28</div>
<div style="position:absolute;left:2140.1px;top:722.5px;width:61.9px;height:50.7px;box-sizing:border-box;background:#fafafa;"></div>
<div style="position:absolute;left:2140.1px;top:736px;width:51.1px;text-align:right;font-size:25.95px;line-height:1;color:#d4d4d4;font-weight:normal;">29</div>
<div style="position:absolute;left:2201.7px;top:722.5px;width:61.9px;height:50.7px;box-sizing:border-box;background:#fafafa;"></div>
<div style="position:absolute;left:2201.7px;top:736px;width:51.1px;text-align:right;font-size:25.95px;line-height:1;color:#d4d4d4;font-weight:normal;">30</div>
<div style="position:absolute;left:1918.0px;top:283.0px;width:693.0px;height:154.5px;box-sizing:border-box;border:4px solid #f0993a;"></div>
</body></html>
